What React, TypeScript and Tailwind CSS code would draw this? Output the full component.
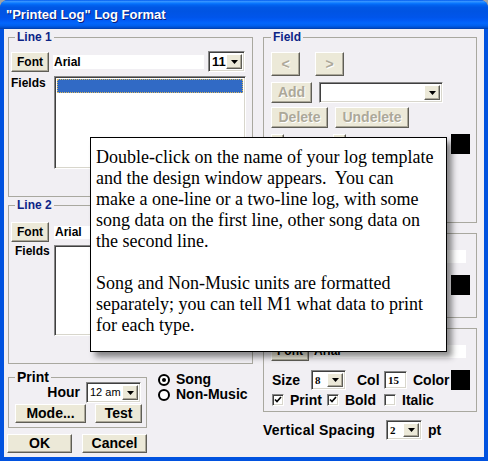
import clsx from "clsx";
import type { ReactNode } from "react";

const raised =
  "bg-[#ece9d8] border border-t-white border-l-white border-r-[#5e5d56] border-b-[#5e5d56] shadow-[inset_-1px_-1px_0_#aca899]";
const sunken =
  "bg-white border border-t-[#878787] border-l-[#878787] border-r-white border-b-white shadow-[inset_1px_1px_0_#3f3f3f,inset_-1px_-1px_0_#d8d6cc]";
const group = "border border-[#a9a89f] min-w-0";
const legendBlue = "px-[2px] text-[12px] leading-[14px] font-bold text-[#0c2486]";

const tipText =
  "Double-click on the name of your log template\nand the design window appears.  You can\nmake a one-line or a two-line log, with some\nsong data on the first line, other song data on\nthe second line.\n\nSong and Non-Music units are formatted\nseparately; you can tell M1 what data to print\nfor each type.";

function Btn({
  className,
  children,
  disabled,
}: {
  className?: string;
  children?: ReactNode;
  disabled?: boolean;
}) {
  return (
    <div
      className={clsx(
        raised,
        "flex items-center justify-center font-bold shrink-0 whitespace-nowrap",
        disabled ? "text-[#aca899] [text-shadow:1px_1px_0_#fff]" : "text-black",
        className
      )}
    >
      {children}
    </div>
  );
}

function Arrow() {
  return (
    <svg width="7" height="4" viewBox="0 0 7 4">
      <path d="M0 0h7L3.5 4z" fill="#000" />
    </svg>
  );
}

function Combo({
  className,
  text,
  textClass,
}: {
  className?: string;
  text?: string;
  textClass?: string;
}) {
  return (
    <div className={clsx(sunken, "flex items-stretch p-[2px] shrink-0", className)}>
      <span
        className={clsx(
          "flex-1 min-w-0 flex items-center pl-[1px] overflow-hidden whitespace-nowrap",
          textClass
        )}
      >
        {text}
      </span>
      <span className={clsx(raised, "w-[16px] flex items-center justify-center")}>
        <Arrow />
      </span>
    </div>
  );
}

function Check({ checked }: { checked?: boolean }) {
  return (
    <span className={clsx(sunken, "w-[12px] h-[12px] flex items-center justify-center shrink-0")}>
      {checked && (
        <svg width="8" height="8" viewBox="0 0 8 8">
          <path d="M1 3.5l2 2 4-4.5" stroke="#000" strokeWidth="1.6" fill="none" />
        </svg>
      )}
    </span>
  );
}

function Radio({ checked, label }: { checked?: boolean; label: string }) {
  return (
    <div className="flex items-center h-[15px]">
      <span className="w-[12px] h-[12px] rounded-full border-[2px] border-black bg-white flex items-center justify-center">
        {checked && <span className="w-[4px] h-[4px] rounded-full bg-black" />}
      </span>
      <span className="ml-[6px] text-[14px] font-bold leading-[15px]">{label}</span>
    </div>
  );
}

// font / size / colour box; `covered` leaves out the labels that sit under the help tip
function FontGroup({ className, covered }: { className?: string; covered?: boolean }) {
  return (
    <fieldset className={clsx(group, "pl-[7px] pr-[6px] pt-[12px]", className)}>
      <div className="flex items-center h-[20px]">
        <Btn className="w-[38px] h-[20px] text-[12px]">{!covered && "Font"}</Btn>
        <div className="ml-[4px] w-[153px] h-[13px] bg-white text-[12px] font-bold leading-[13px] pl-[1px]">
          {!covered && "Arial"}
        </div>
      </div>
      <div className="mt-[9px] flex items-center h-[20px]">
        <span className="w-[40px] pl-[1px] text-[14px] font-bold">{!covered && "Size"}</span>
        <Combo
          className="w-[35px] h-[20px]"
          text={covered ? "" : "8"}
          textClass="font-['Liberation_Serif',serif] font-bold text-[11px]"
        />
        <span className="ml-[11px] w-[22px] text-[14px] font-bold">{!covered && "Col"}</span>
        <div
          className={clsx(
            sunken,
            "ml-[5px] w-[23px] h-[18px] flex items-center pl-[3px] font-['Liberation_Serif',serif] font-bold text-[11px]"
          )}
        >
          {!covered && "15"}
        </div>
        <span className="ml-[6px] text-[14px] font-bold">{!covered && "Color"}</span>
        <div className="ml-auto w-[19px] h-[20px] bg-black" />
      </div>
      {!covered && (
        <div className="mt-[2px] flex items-center h-[16px] text-[14px] font-bold">
          <span className="ml-[1px]">
            <Check checked />
          </span>
          <span className="ml-[6px]">Print</span>
          <span className="ml-[5px]">
            <Check checked />
          </span>
          <span className="ml-[6px]">Bold</span>
          <span className="ml-[8px]">
            <Check />
          </span>
          <span className="ml-[6px]">Italic</span>
        </div>
      )}
    </fieldset>
  );
}

export default function App() {
  return (
    <div className="w-[488px] h-[461px] bg-[#a3a3a3] font-['Liberation_Sans',Arial,sans-serif] text-black">
      <div className="w-full h-full flex flex-col bg-[#0152df] rounded-t-[8px] overflow-hidden">
        {/* Title bar */}
        <div className="h-[29px] shrink-0 flex items-center pl-[6px] bg-[linear-gradient(to_bottom,#0058ee_0%,#3593ff_5%,#1a84ff_9%,#0470fc_13%,#0262ee_18%,#0057e5_26%,#0054e3_40%,#0055eb_60%,#005bf5_70%,#0266fc_80%,#0060ef_88%,#0052d6_94%,#003ea8_100%)] text-white font-bold text-[13px] [text-shadow:1px_1px_0_#0a1e7a]">
          {'"Printed Log" Log Format'}
        </div>

        <div className="relative flex-1 mx-[4px] mb-[4px] bg-[#f1eff3] flex">
          {/* Left column */}
          <div className="w-[249px] shrink-0 pl-[4px] flex flex-col">
            <fieldset className={clsx(group, "mt-[1px] h-[167px] pl-[2px] pr-[6px] pt-[7px]")}>
              <legend className={clsx(legendBlue, "ml-[4px]")}>Line 1</legend>
              <div className="flex items-center h-[21px]">
                <Btn className="w-[38px] h-[20px] text-[12px]">Font</Btn>
                <div className="ml-[4px] w-[151px] h-[14px] bg-white text-[12px] font-bold leading-[14px] pl-[1px]">
                  Arial
                </div>
                <Combo className="ml-[4px] w-[37px] h-[21px]" text="11" textClass="text-[13px] font-bold" />
              </div>
              <div className="mt-[4px] flex">
                <div className="w-[43px] text-[12px] font-bold leading-[14px]">Fields</div>
                <div className={clsx(sunken, "w-[192px] h-[93px] p-[2px]")}>
                  <div className="h-[14px] bg-[#316ac5] border border-dotted border-[#d8b860]" />
                </div>
              </div>
            </fieldset>

            <fieldset className={clsx(group, "mt-[1px] h-[166px] pl-[2px] pr-[6px] pt-[10px]")}>
              <legend className={clsx(legendBlue, "ml-[4px]")}>Line 2</legend>
              <div className="flex items-center h-[20px]">
                <Btn className="w-[38px] h-[20px] text-[12px]">Font</Btn>
                <div className="ml-[5px] w-[150px] h-[13px] bg-white text-[12px] font-bold leading-[13px] pl-[1px]">
                  Arial
                </div>
                <Combo className="ml-[4px] w-[37px] h-[21px]" text="" />
              </div>
              <div className="mt-[2px] flex">
                <div className="w-[43px] pl-[4px] text-[12px] font-bold leading-[14px]">Fields</div>
                <div className={clsx(sunken, "mt-[1px] w-[192px] h-[91px]")} />
              </div>
            </fieldset>

            <div className="flex items-start">
              <fieldset className={clsx(group, "mt-[6px] w-[139px] h-[58px]")}>
                <legend className="ml-[6px] px-[2px] text-[14px] leading-[14px] font-bold">Print</legend>
                <div className="-mt-[2px] flex items-center">
                  <span className="w-[71px] text-right text-[14px] font-bold">Hour</span>
                  <Combo className="ml-[6px] w-[55px] h-[21px]" text="12 am" textClass="text-[11px]" />
                </div>
                <div className="mt-[1px] flex pl-[6px] gap-[9px]">
                  <Btn className="w-[71px] h-[19px] text-[14px]">Mode...</Btn>
                  <Btn className="w-[47px] h-[19px] text-[14px]">Test</Btn>
                </div>
              </fieldset>
              <div className="ml-[11px] mt-[8px] flex flex-col">
                <Radio checked label="Song" />
                <Radio label="Non-Music" />
              </div>
            </div>

            <div className="mt-[6px] -ml-[1px] flex gap-[10px]">
              <Btn className="w-[65px] h-[19px] text-[14px]">OK</Btn>
              <Btn className="w-[65px] h-[19px] text-[14px]">Cancel</Btn>
            </div>
          </div>

          {/* Right column */}
          <div className="ml-[10px] w-[214px] shrink-0 flex flex-col">
            <fieldset className={clsx(group, "mt-[1px] h-[193px] pl-[7px] pr-[6px] pt-[8px]")}>
              <legend className={legendBlue}>Field</legend>
              <div className="flex">
                <Btn disabled className="w-[29px] h-[24px] text-[14px]">
                  &lt;
                </Btn>
                <Btn disabled className="ml-[15px] w-[29px] h-[24px] text-[14px]">
                  &gt;
                </Btn>
              </div>
              <div className="mt-[6px] flex">
                <Btn disabled className="w-[41px] h-[21px] text-[14px]">
                  Add
                </Btn>
                <Combo className="ml-[7px] w-[124px] h-[21px]" text="" />
              </div>
              <div className="mt-[4px] flex">
                <Btn disabled className="w-[57px] h-[21px] text-[14px]">
                  Delete
                </Btn>
                <Btn disabled className="ml-[7px] w-[74px] h-[21px] text-[14px]">
                  Undelete
                </Btn>
              </div>
              <div className="mt-[6px] flex">
                <Btn className="w-[13px] h-[19px]" />
                <Btn className="ml-[49px] w-[13px] h-[19px]" />
                <div className="ml-auto w-[19px] h-[20px] bg-black" />
              </div>
            </fieldset>

            <FontGroup className="mt-[10px] h-[85px]" covered />
            <FontGroup className="mt-[10px] h-[84px]" />

            <div className="mt-[8px] flex items-center h-[20px]">
              <span className="w-[123px] text-[14px] font-bold tracking-[0.25px]">Vertical Spacing</span>
              <Combo
                className="w-[36px] h-[20px]"
                text="2"
                textClass="font-['Liberation_Serif',serif] font-bold text-[11px]"
              />
              <span className="ml-[6px] text-[14px] font-bold">pt</span>
            </div>
          </div>

          {/* Help tip lying over the dialog */}
          <div className="absolute left-[86px] top-[108px] w-[357px] h-[215px] bg-white border border-black shadow-[5px_5px_6px_rgba(0,0,0,0.45)] pl-[5px] pt-[9px] font-['Liberation_Serif',serif] text-[18px] leading-[21px] whitespace-pre">
            {tipText}
          </div>
        </div>
      </div>
    </div>
  );
}
